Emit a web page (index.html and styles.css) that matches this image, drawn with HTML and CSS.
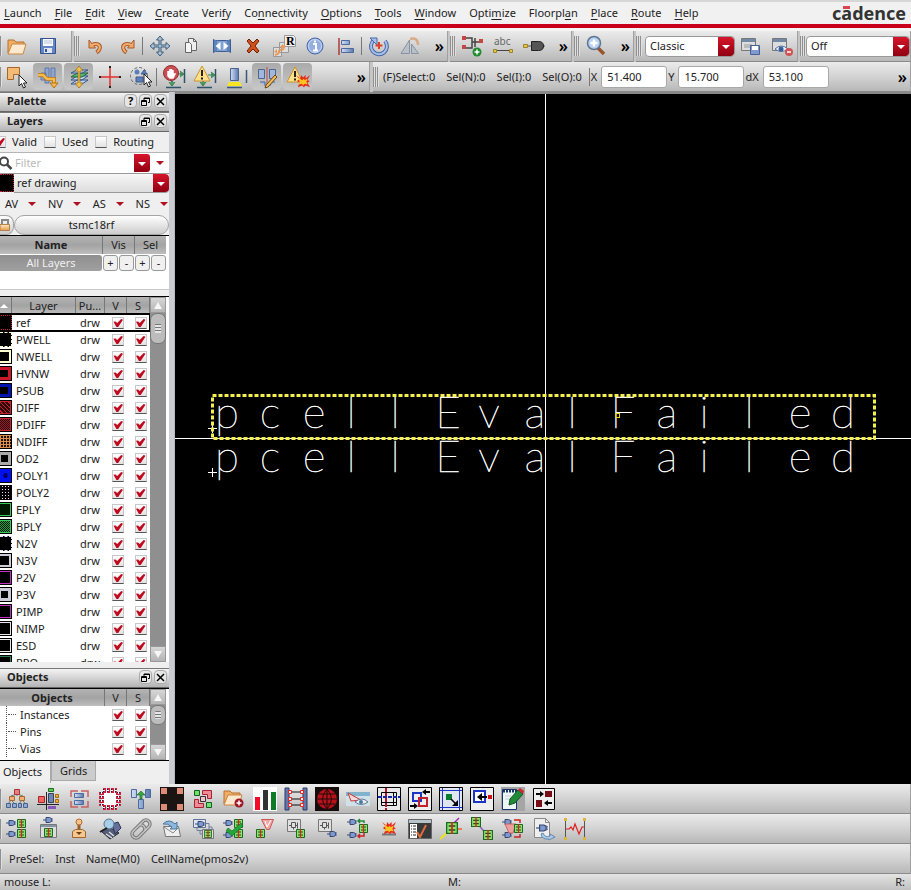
FILE: index.html
```html
<!DOCTYPE html>
<html lang="en">
<head>
    <meta charset="UTF-8">
    <meta name="viewport" content="width=device-width, initial-scale=1.0">
    <title>Layout Editor</title>
    <link rel="stylesheet" href="styles.css">
</head>
<body>
    <!-- Shared icon parts -->
    <svg class="defs" aria-hidden="true">
        <defs>
            <linearGradient id="gold" x1="0" y1="0" x2="0" y2="1"><stop offset="0" stop-color="#ffe9c4"/><stop offset="1" stop-color="#e59a45"/></linearGradient>
            <linearGradient id="steel" x1="0" y1="0" x2="1" y2="0"><stop offset="0" stop-color="#d3e0f5"/><stop offset="1" stop-color="#5877ad"/></linearGradient>
        </defs>
        <symbol id="gate" viewBox="0 0 10 6"><path d="M0 3h3" stroke="#3d4a70"/><path d="M3 .5h3.500l2 1v3l-2 1H3z" fill="#7d9ad0" stroke="#35456f"/><path d="M8 2h2M8 4h2" stroke="#54638b"/></symbol>
        <symbol id="cell" viewBox="0 0 9 9"><path d="M.5.5h8v8h-8z" fill="#8ee36d" stroke="#176b22"/><path d="M2 3h5M2 6h5" stroke="#11521a"/><path d="M4.500 0v9" stroke="#e02020" stroke-width="1.300"/></symbol>
        <symbol id="cursor" viewBox="0 0 10 15"><path d="M1 1v11l2.500-2.500 2 4.500 2-1-2-4H9z" fill="#fff" stroke="#222"/></symbol>
        <symbol id="warn" viewBox="0 0 18 17"><path d="M9 1l8 15H1z" fill="#ffe08a" stroke="#c99432" stroke-linejoin="round"/><path d="M9 5v6M9 12.500v2" stroke="#222" stroke-width="2"/></symbol>
        <symbol id="boom" viewBox="0 0 16 16"><path d="M0 1l5 4 1-4 2 3 3-3v4l5-4-3 6 3 1-3 2 3 5-5-2-2 2-2-2-5 2 2-5-3-2 3-2z" fill="#e5281c"/><path d="M3 4l4 3 2-2 1 2 3-2-1 4 1 3-3-1-2 2-1-2-4 1 1-3z" fill="#ffc41e"/></symbol>
        <symbol id="box" viewBox="0 0 14 13"><path d="M.5.5h13v12H.5z" fill="#e0e0e0" stroke="#777"/><path d="M2 6.500h2M4.500 3.500h4v5h-4zM6.500 8.500v2M8.500 6.500h2v-3M10.500 6.500v3" fill="none" stroke="#555"/></symbol>
        <symbol id="folder" viewBox="0 0 20 17"><path d="M1 15V2h6l2 2h8v4" fill="#efad65" stroke="#b77330"/><path d="M1 16L5 6h14l-3 10z" fill="#fde9cd" stroke="#c98543"/></symbol>
    </svg>

    <header class="menubar">
        <nav class="menus">
            <button><u>L</u>aunch</button>
            <button><u>F</u>ile</button>
            <button><u>E</u>dit</button>
            <button><u>V</u>iew</button>
            <button><u>C</u>reate</button>
            <button>Veri<u>f</u>y</button>
            <button>Co<u>n</u>nectivity</button>
            <button><u>O</u>ptions</button>
            <button><u>T</u>ools</button>
            <button><u>W</u>indow</button>
            <button>Opti<u>m</u>ize</button>
            <button>Floorpl<u>a</u>n</button>
            <button><u>P</u>lace</button>
            <button><u>R</u>oute</button>
            <button><u>H</u>elp</button>
        </nav>
        <div class="logo">c<span class="logo-a">ā</span>dence</div>
    </header>

    <!-- Edit toolbars -->
    <div class="toolbar toolbar-main">
        <div class="group group-first">
            <i class="handle handle-cut"></i>
            <button class="tool" aria-label="Open"><svg viewBox="0 0 24 24"><use href="#folder" x="2" y="4" width="20" height="17"/></svg></button>
            <button class="tool" aria-label="Save"><svg viewBox="0 0 24 24"><path d="M4.500 4.500h15v15h-15z" fill="#6685c5" stroke="#33508f"/><path d="M7 5h10v7H7z" fill="#f7f9fc"/><path d="M8 7h8M8 9h8" stroke="#b8c4d8"/><path d="M8 14h8v5H8z" fill="#dfe6f0"/><path d="M9 15h2v3H9z" fill="#33508f"/></svg></button>
        </div>
        <div class="group">
            <i class="handle"></i>
            <button class="tool" aria-label="Undo"><svg viewBox="0 0 24 24"><path d="M8 11c5-2.500 9 0 7.500 4-.5 1.500-1.500 2.500-3 3.500" fill="none" stroke="#a8592a" stroke-width="4"/><path d="M5 14V6l6.500 8z" fill="#f0a868" stroke="#a8592a"/><path d="M8 11c5-2.500 9 0 7.500 4-.5 1.500-1.500 2.500-2.500 3" fill="none" stroke="#f3ae70" stroke-width="2"/></svg></button>
            <button class="tool" aria-label="Redo"><svg viewBox="0 0 24 24"><path d="M16 11c-5-2.500-9 0-7.500 4 .5 1.500 1.500 2.500 3 3.500" fill="none" stroke="#a8592a" stroke-width="4"/><path d="M19 14V6l-6.500 8z" fill="#f0a868" stroke="#a8592a"/><path d="M16 11c-5-2.500-9 0-7.500 4 .5 1.500 1.500 2.500 2.500 3" fill="none" stroke="#f3ae70" stroke-width="2"/></svg></button>
            <i class="sep"></i>
            <button class="tool" aria-label="Move"><svg viewBox="0 0 24 24"><path d="M12 2l3.500 4H13v5h5V8.500l4 3.500-4 3.500V13h-5v5h2.500L12 22l-3.500-4H11v-5H6v2.500L2 12l4-3.500V11h5V6H8.500z" fill="#a9bfd4" stroke="#3f5f7c"/></svg></button>
            <button class="tool" aria-label="Copy"><svg viewBox="0 0 24 24"><path d="M9.500 4.500h5l3 3v9h-8z" fill="#eee" stroke="#666"/><path d="M14.500 4.500v3h3" fill="none" stroke="#666"/><path d="M6.500 8.500h4l2 2v8h-6z" fill="#f4f4f4" stroke="#666"/></svg></button>
            <button class="tool" aria-label="Stretch"><svg viewBox="0 0 24 24"><path d="M3.500 5.500q2 2 4 1h9q2 1 4-1v13q-2-2-4-1h-9q-2-1-4 1z" fill="#5c84bd" stroke="#3b5d91"/><path d="M7 7h10v10H7z" fill="#7fa2d2"/><path d="M10.500 8v8L5.500 12zM13.500 8v8l5-4z" fill="#fff"/></svg></button>
            <button class="tool" aria-label="Delete"><svg viewBox="0 0 24 24"><path d="M6 7l2-2 4 4 4-4 2 2-4 5 4 5-2 2-4-4-4 4-2-2 4-5z" fill="#d0501b" stroke="#702000"/></svg></button>
            <button class="tool" aria-label="Repeat"><svg viewBox="0 0 24 24"><path d="M1.500 13.500h8v9h-8zM7.500 8.500h9v10h-9z" fill="#ddd" stroke="#999"/><path d="M12.500 1.500h9l2 2v9h-11z" fill="#f2f2f2" stroke="#999"/><path d="M3 21q5-1 4-5M8 16q5 0 4-5" stroke="#eb9556" stroke-width="2" fill="none"/><path d="M2 18l3-3v4zM8 13l3-3v4z" fill="#eb9556"/><text x="14" y="11" class="icon-letter">R</text></svg></button>
            <button class="tool" aria-label="Properties"><svg viewBox="0 0 24 24"><circle cx="12" cy="12" r="8" fill="#93aedf" stroke="#4a68a8"/><circle cx="12" cy="12" r="6.500" fill="none" stroke="#c9d8f4"/><path d="M10 10h3v6M10 16.500h5M11 7.500h2" stroke="#fff" stroke-width="2" fill="none"/></svg></button>
            <button class="tool" aria-label="Align"><svg viewBox="0 0 24 24"><path d="M5 4v17" stroke="#b03a3a" stroke-width="1.500"/><path d="M7.500 6.500h8v4h-8zM7.500 14.500h12v4h-12z" fill="url(#steel)" stroke="#4c6aa0"/></svg></button>
            <i class="sep"></i>
            <button class="tool" aria-label="Rotate"><svg viewBox="0 0 24 24"><path d="M7 6a8 8 0 1 0 11 1" fill="none" stroke="#4667a6" stroke-width="4"/><path d="M7 6a8 8 0 1 0 11 1" fill="none" stroke="#a7bfe8" stroke-width="2"/><path d="M3 4h7v7z" fill="#a7bfe8" stroke="#4667a6"/><path d="M12 8v7M8.500 11.500h7" stroke="#e14026" stroke-width="2"/></svg></button>
            <button class="tool" aria-label="Flip"><svg viewBox="0 0 24 24"><path d="M3 19.500L11.500 6v13.500zM13.500 10l7 9.500h-7z" fill="#b9c0c9" stroke="#8993a0"/><path d="M12 5q8-2 8 6" fill="none" stroke="#d9aa86" stroke-width="2.500"/></svg></button>
            <button class="more" aria-label="More edit tools">»</button>
        </div>
        <div class="group">
            <i class="handle"></i>
            <button class="tool" aria-label="Create wire"><svg viewBox="0 0 24 24"><path d="M4 4h8v10H4M12 8h8M15 4v9" fill="none" stroke="#444" stroke-width="1.500"/><path d="M2 2h4v4H2zM2 11h4v4H2zM19 5h4v4h-4z" fill="#c64646"/><circle cx="17" cy="18" r="4.500" fill="#238b32"/><path d="M17 15.500v5M14.500 18h5" stroke="#fff" stroke-width="1.500"/></svg></button>
            <button class="tool" aria-label="Wire name"><svg viewBox="0 0 24 24"><text x="3" y="11" class="icon-abc">abc</text><path d="M4 16.500h17" stroke="#444"/><path d="M2.500 15.500h3v3h-3zM18.500 15.500h3v3h-3z" fill="#e3c947" stroke="#9a852b"/></svg></button>
            <button class="tool" aria-label="Create pin"><svg viewBox="0 0 24 24"><path d="M4 12h19" stroke="#555"/><path d="M9.500 7.500h7q5 0 5 4.500t-5 4.500h-7z" fill="#555" stroke="#222"/><path d="M1.500 10.500h4v3h-4z" fill="#e3c947" stroke="#9a852b"/></svg></button>
            <button class="more" aria-label="More create tools">»</button>
        </div>
        <div class="group">
            <i class="handle"></i>
            <button class="tool" aria-label="Zoom"><svg viewBox="0 0 24 24"><path d="M14 14l6 6" stroke="#9a542c" stroke-width="3.500"/><circle cx="10" cy="9" r="6.500" fill="#b9d2ef" stroke="#607591" stroke-width="1.500"/><path d="M10 5.500v7M6.500 9h7" stroke="#fff" stroke-width="2.500"/></svg></button>
            <button class="more" aria-label="More view tools">»</button>
        </div>
        <div class="group">
            <i class="handle"></i>
            <span class="combo combo-workspace"><select aria-label="Workspace"><option>Classic</option></select></span>
            <button class="tool" aria-label="Save workspace"><svg viewBox="0 0 24 24"><path d="M2.500 4.500h14v12h-14z" fill="#ddd" stroke="#777"/><path d="M3 5h13v3H3z" fill="#7189a5"/><path d="M5 11h8M5 13h6" stroke="#999"/><path d="M11.500 11.500h9v9h-9z" fill="#7e9ad1" stroke="#476197"/><path d="M13 12h6v4h-6z" fill="#fff"/></svg></button>
            <button class="tool" aria-label="Hide workspace"><svg viewBox="0 0 24 24"><path d="M2.500 4.500h14v12h-14z" fill="#ddd" stroke="#777"/><path d="M3 5h13v3H3z" fill="#7189a5"/><path d="M5 15q6-6 13 0-7 5-13 0z" fill="#eef3fa" stroke="#54719c"/><circle cx="11" cy="15" r="2.500" fill="#365f9a"/><circle cx="19" cy="18" r="4" fill="#cf5454"/><path d="M17 18h4" stroke="#fff" stroke-width="1.500"/></svg></button>
        </div>
        <div class="group group-last">
            <i class="handle"></i>
            <span class="combo"><select aria-label="Mode"><option>Off</option></select></span>
        </div>
    </div>

    <div class="toolbar toolbar-select">
        <div class="group group-options">
            <i class="handle handle-cut"></i>
            <button class="tool" aria-label="Partial select"><svg viewBox="0 0 24 24"><path d="M2.500 2.500h12v7h-6v5h-6z" fill="#f3bb78" stroke="#a76529"/><use href="#cursor" x="13" y="9" width="10" height="15"/></svg></button>
            <button class="tool pressed" aria-label="Constraint aware"><svg viewBox="0 0 24 24"><path d="M9 3h4v15H9zM15 3h4v10h-4zM5 8h5v7H5z" fill="#8ea6d2" stroke="#6078a8"/><path d="M2 10h5l4 4h7v6" fill="none" stroke="#ad7420" stroke-width="4"/><path d="M2 10h5l4 4h7v6" fill="none" stroke="#f6b94b" stroke-width="2.500"/><path d="M14 18h8l-4 5z" fill="#f6b94b" stroke="#ad7420"/></svg></button>
            <button class="tool pressed" aria-label="Hierarchy select"><svg viewBox="0 0 24 24"><path d="M4 19l6-4h11l-6 4zM4 15l6-4h11l-6 4z" fill="#c5d6ee" stroke="#31558d"/><path d="M4 12l6-4h11l-6 4z" fill="#5cb474" stroke="#1b6933"/><path d="M4 8l6-3h11l-6 3z" fill="#c5d6ee" stroke="#31558d"/><path d="M12 1l4 5h-3v12h3l-4 5-4-5h3V6H8z" fill="#f4c04c" stroke="#8b661a" stroke-width=".7"/></svg></button>
            <button class="tool" aria-label="Crosshair"><svg viewBox="0 0 24 24"><path d="M12 1v22M1 12h22" stroke="#e33131" stroke-width="1.500"/><path d="M12 1v2M12 21v2M1 12h2M21 12h2" stroke="#222" stroke-width="2"/></svg></button>
            <button class="tool" aria-label="Area select"><svg viewBox="0 0 24 24"><circle cx="10" cy="11" r="8.500" fill="none" stroke="#666" stroke-dasharray="3 2"/><circle cx="8" cy="7" r="2.500" fill="#5c7fba"/><path d="M12 9l3-4 3 4zM7 12h7v5H7z" fill="#5c7fba" stroke="#3e5b90"/><use href="#cursor" x="14" y="8" width="10" height="15"/></svg></button>
            <i class="sep"></i>
            <button class="tool" aria-label="Stop on violation"><svg viewBox="0 0 24 24"><path d="M10 16v5M4 22.500h15M22.500 4v14" stroke="#2e526c" stroke-width="1.500"/><path d="M15 9h6M18 6l4 3-4 3M7 17l3 4 3-4" fill="#4d9b61" stroke="#3c8350"/><circle cx="9" cy="8" r="7.500" fill="#c94d51" stroke="#922d33"/><path d="M6 6v5l2 2h3l2-4-2 0V5M8 9V4M9.500 9V4" fill="#fff" stroke="#fff" stroke-width="1.500"/></svg></button>
            <button class="tool" aria-label="Warn on violation"><svg viewBox="0 0 24 24"><path d="M10 16v5M4 22.500h15M22.500 4v14" stroke="#2e526c" stroke-width="1.500"/><path d="M15 10h6M18 7l4 3-4 3M7 17l3 4 3-4" fill="#4d9b61" stroke="#3c8350"/><use href="#warn" x="0" y="0" width="18" height="17"/></svg></button>
            <button class="tool" aria-label="Highlight"><svg viewBox="0 0 24 24"><path d="M6.500 3.500h8v12h-8z" fill="url(#steel)" stroke="#4b628d"/><path d="M5 17h11l2 4H3z" fill="#f5e525"/><path d="M3 22.500h15M22.500 5v13" stroke="#3a5878" stroke-width="1.500"/></svg></button>
            <button class="tool pressed" aria-label="Edit in place"><svg viewBox="0 0 24 24"><path d="M3.500 4.500h6v9h-6zM14.500 4.500h6v9h-6zM5 17h5v4M15 21v-4h5" fill="#a3b7dc" stroke="#4b6596"/><path d="M12 2v20" stroke="#b44b4b"/><path d="M11 20L20 10l2 2-9 10-3 1z" fill="#f0bd4e" stroke="#6b4420"/></svg></button>
            <button class="tool pressed" aria-label="Show violations"><svg viewBox="0 0 24 24"><use href="#warn" x="0" y="1" width="18" height="17"/><use href="#boom" x="10" y="9" width="14" height="14"/></svg></button>
            <button class="more" aria-label="More options">»</button>
        </div>
        <div class="group group-coords">
            <i class="handle"></i>
            <span class="readout">(F)Select:0</span>
            <span class="readout">Sel(N):0</span>
            <span class="readout">Sel(I):0</span>
            <span class="readout">Sel(O):0</span>
            <i class="sep"></i>
            <label class="coord">X<input type="text" value="51.400"></label>
            <label class="coord">Y<input type="text" value="15.700"></label>
            <label class="coord">dX<input type="text" value="53.100"></label>
            <button class="more" aria-label="More readouts">»</button>
        </div>
    </div>

    <main class="workspace">
        <aside class="sidebar">
            <div class="panel-title">
                <h2>Palette</h2>
                <button aria-label="Help">?</button>
                <button aria-label="Float palette"><svg viewBox="0 0 9 9"><path d="M3 1h5.500v4.500H7M.5 3.500h5v5h-5zM3 1v2M3 1.500h5.500M.5 4.500h5" fill="none" stroke="#000"/></svg></button>
                <button aria-label="Close palette"><svg viewBox="0 0 9 9"><path d="M1 1l7 7M8 1L1 8" stroke="#000" stroke-width="1.500"/></svg></button>
            </div>
            <div class="panel-title">
                <h2>Layers</h2>
                <button aria-label="Float layers"><svg viewBox="0 0 9 9"><path d="M3 1h5.500v4.500H7M.5 3.500h5v5h-5zM3 1v2M3 1.500h5.500M.5 4.500h5" fill="none" stroke="#000"/></svg></button>
                <button aria-label="Close layers"><svg viewBox="0 0 9 9"><path d="M1 1l7 7M8 1L1 8" stroke="#000" stroke-width="1.500"/></svg></button>
            </div>
            <div class="filters">
                <label><input type="checkbox" class="check" checked>Valid</label>
                <label><input type="checkbox" class="check">Used</label>
                <label><input type="checkbox" class="check">Routing</label>
            </div>
            <div class="search">
                <svg class="search-icon" viewBox="0 0 14 14"><circle cx="4" cy="5.500" r="4" fill="none" stroke="#444" stroke-width="2"/><path d="M7 8.500l4.500 4.500" stroke="#444" stroke-width="2.500"/></svg>
                <input type="text" placeholder="Filter" aria-label="Filter layers">
                <button class="drop" aria-label="Filter history"></button>
                <button class="caret" aria-label="Filter options"></button>
            </div>
            <div class="current-layer">
                <i class="swatch ref"></i>
                <span class="combo"><select aria-label="Current layer"><option>ref drawing</option></select></span>
            </div>
            <div class="visibility">
                <button>AV<i class="caret"></i></button>
                <button>NV<i class="caret"></i></button>
                <button>AS<i class="caret"></i></button>
                <button>NS<i class="caret"></i></button>
            </div>
            <div class="library">
                <button class="lock" aria-label="Lock"><svg viewBox="0 0 12 14"><path d="M2 7V2h6v5" fill="none" stroke="#888" stroke-width="2"/><path d="M0 6.500h9.500v6H0z" fill="url(#gold)" stroke="#b1824d"/></svg></button>
                <button class="lib-name">tsmc18rf</button>
            </div>
            <div class="all-layers">
                <div class="all-head"><b>Name</b><span>Vis</span><span>Sel</span></div>
                <div class="all-row">
                    <span class="all-name">All Layers</span>
                    <button aria-label="Show all">+</button>
                    <button aria-label="Hide all">-</button>
                    <button aria-label="Select all">+</button>
                    <button aria-label="Deselect all">-</button>
                </div>
            </div>
            <div class="list layer-list">
                <table>
                    <thead>
                        <tr><th class="col-swatch"><i class="sort"></i></th><th>Layer</th><th class="col-purpose">Pu...</th><th class="col-v">V</th><th class="col-s">S</th></tr>
                    </thead>
                    <tbody id="layers"></tbody>
                </table>
                <div class="scrollbar"><i class="up"></i><i class="thumb"></i><i class="down"></i></div>
            </div>
            <div class="panel-title">
                <h2>Objects</h2>
                <button aria-label="Float objects"><svg viewBox="0 0 9 9"><path d="M3 1h5.500v4.500H7M.5 3.500h5v5h-5zM3 1v2M3 1.500h5.500M.5 4.500h5" fill="none" stroke="#000"/></svg></button>
                <button aria-label="Close objects"><svg viewBox="0 0 9 9"><path d="M1 1l7 7M8 1L1 8" stroke="#000" stroke-width="1.500"/></svg></button>
            </div>
            <div class="list object-list">
                <table>
                    <thead>
                        <tr><th><b>Objects</b></th><th class="col-v">V</th><th class="col-s">S</th></tr>
                    </thead>
                    <tbody id="objects"></tbody>
                </table>
                <div class="scrollbar"><i class="up"></i><i class="thumb thumb-short"></i><i class="down"></i></div>
            </div>
            <div class="tabs">
                <button class="active">Objects</button>
                <button>Grids</button>
            </div>
        </aside>

        <svg class="canvas" role="img" aria-label="Layout view">
            <!-- cursor crosshair -->
            <path class="hair" d="M370.500 0v2000M0 344.500h4000"/>
            <!-- failed pcell labels, one anchor per letter -->
            <g class="label">
                <text y="334" x="52 95 139 176 220 273 314 360 397 448 492 529 574 625 668">pcellEvalFailed</text>
                <text y="378" x="52 95 139 176 220 273 314 360 397 448 492 529 574 625 668">pcellEvalFailed</text>
            </g>
            <path class="hair" d="M33 334.500h9M37.500 330v9M33 378.500h9M37.500 374v9"/>
            <!-- selection -->
            <rect class="selection" x="37.500" y="301.500" width="662" height="43"/>
            <rect class="origin" x="440.500" y="319.500" width="4" height="4"/>
        </svg>
    </main>

    <!-- Design toolbars -->
    <div class="toolbar">
        <div class="group group-last">
            <i class="handle handle-cut"></i>
            <button class="tool" aria-label="Hierarchy"><svg viewBox="0 0 24 24"><path d="M12 6v3M6 13l-3 4M6 13l4 4M17 13l-3 4M17 13l4 4M6 9l6-2 6 2" fill="none" stroke="#777"/><path d="M9.500 2.500h5v5h-5z" fill="#e58080" stroke="#a33"/><path d="M4.500 9.500h5v4h-5zM14.500 9.500h5v4h-5z" fill="#f2b073" stroke="#a66a30"/><path d="M1.500 16.500h4v4h-4zM7.500 16.500h4v4h-4zM13.500 16.500h3v4h-3zM18.500 16.500h4v4h-4z" fill="#8fa9d4" stroke="#46628f"/></svg></button>
            <button class="tool" aria-label="Placement"><svg viewBox="0 0 24 24"><path d="M2.500 9.500h6v6h-6z" fill="#e66" stroke="#a22"/><path d="M12.500 1.500h5v3h-5z" fill="#5c5" stroke="#262"/><path d="M12.500 6.500h5v9h-5z" fill="#6d86b5" stroke="#345"/><path d="M19.500 7.500h3v3h-3zM19.500 12.500h3v3h-3z" fill="#f2ad33" stroke="#a66a10"/><path d="M12 19h8v3h-8z" fill="#85b"/><path d="M10.500 5v18M1 17.500h22" stroke="#222"/></svg></button>
            <button class="tool" aria-label="Fit group"><svg viewBox="0 0 24 24"><path d="M4 10V4h7M14 4h7v6M21 14v6h-7M11 20H4v-6" fill="none" stroke="#c96060" stroke-width="1.500"/><path d="M7.500 6.500h9v4h-9zM7.500 13.500h9v4h-9z" fill="url(#steel)" stroke="#4c6aa0"/></svg></button>
            <button class="tool" aria-label="Pad ring"><svg viewBox="0 0 24 24"><path d="M4 5h16v15H4z" fill="#fff"/><path d="M5 3.500h14M5 20.500h14M3.500 5v14M20.500 5v14" stroke="#d31f3e" stroke-width="5" stroke-dasharray="3 1"/><path d="M5 3.500h14M5 20.500h14M3.500 5v14M20.500 5v14" stroke="#224" stroke-width="3" stroke-dasharray="1 3"/><path d="M5 3.500h14M5 20.500h14M3.500 5v14M20.500 5v14" stroke="#fff" stroke-width="1" stroke-dasharray="2 2"/></svg></button>
            <button class="tool" aria-label="Insert device"><svg viewBox="0 0 24 24"><path d="M2.500 2.500h5v8h-5zM16.500 2.500h5v8h-5zM9.500 12.500h5v9h-5z" fill="url(#steel)" stroke="#4c6aa0"/><path d="M12 4l4 4h-3v4h-2V8H8z" fill="#36a844" stroke="#17611f" stroke-width=".6"/></svg></button>
            <button class="tool" aria-label="Cross"><svg viewBox="0 0 24 24"><path d="M0 0h24v24H0z" fill="#1a1512"/><path d="M1 1h6v6H1zM17 1h6v6h-6zM1 17h6v6H1zM17 17h6v6h-6z" fill="#dd8a76"/></svg></button>
            <button class="tool" aria-label="Floorplan blocks"><svg viewBox="0 0 24 24"><path d="M11.500 3.500h9v8h-4v-4h-5zM3.500 12.500h4v4h5v4h-9z" fill="#ee8b94" stroke="#a82332"/><path d="M3.500 3.500h5v5h-5zM15.500 15.500h5v5h-5z" fill="#6de36d" stroke="#165f20"/><path d="M9.500 9.500h5v5h-5z" fill="#f7c3c8" stroke="#333"/></svg></button>
            <button class="tool" aria-label="Add library"><svg viewBox="0 0 24 24"><use href="#folder" x="1" y="2" width="20" height="17"/><circle cx="17" cy="16" r="4.500" fill="#a01825"/><path d="M17 13.500v5M14.500 16h5" stroke="#fff" stroke-width="1.500"/></svg></button>
            <button class="tool" aria-label="Statistics"><svg viewBox="0 0 24 24"><path d="M0 0h24v24H0z" fill="#fff"/><path d="M2 10h5v13H2z" fill="#f30b2a"/><path d="M10 3h5v20h-5z" fill="#333"/><path d="M18 5h5v18h-5z" fill="#0d7b27"/></svg></button>
            <button class="tool" aria-label="Routing channel"><svg viewBox="0 0 24 24"><path d="M1 1h4v22H1zM19 1h4v22h-4z" fill="#6477aa" stroke="#2c3a66"/><path d="M5 5h14M5 12h14M5 18h14" stroke="#111"/><path d="M4.500 3.500h3v3h-3zM16.500 3.500h3v3h-3zM4.500 10.500h3v3h-3zM16.500 10.500h3v3h-3zM4.500 16.500h3v3h-3zM16.500 16.500h3v3h-3z" fill="#fff" stroke="#e22"/></svg></button>
            <button class="tool" aria-label="Global net"><svg viewBox="0 0 24 24"><path d="M0 0h24v24H0z" fill="#160c0c"/><circle cx="12" cy="12" r="10" fill="#b5121b"/><path d="M2 12h20M4 7h16M4 17h16M12 2v20M12 2q-9 10 0 20M12 2q9 10 0 20" fill="none" stroke="#250808"/></svg></button>
            <button class="tool" aria-label="View net"><svg viewBox="0 0 24 24"><path d="M0 5h24v14H0z" fill="#cfe2ea"/><path d="M0 5h24v4H0z" fill="#82b3ce"/><path d="M2 6l13 7-10 1z" fill="#f5dada" stroke="#cf3434"/><path d="M9 15q7-6 13 0-7 5-13 0z" fill="#eee" stroke="#5b7897"/><circle cx="15" cy="15" r="2" fill="#4579a5"/></svg></button>
            <button class="tool" aria-label="Center axes"><svg viewBox="0 0 24 24"><path d="M.5.5h23v23H.5z" fill="#e9e9e9" stroke="#000"/><path d="M4.500 5.500h15v13h-15zM16.500 5v13M5 15.500h14" fill="none" stroke="#000"/><path d="M9 1v22" stroke="#b3152b" stroke-width="2" stroke-dasharray="4 1"/><path d="M1 10h22" stroke="#1328a8" stroke-width="2" stroke-dasharray="4 1"/></svg></button>
            <button class="tool" aria-label="Swap"><svg viewBox="0 0 24 24"><path d="M.5.5h23v23H.5z" fill="#eee" stroke="#000"/><path d="M5 6h8v8H5z" fill="none" stroke="#1c35c7" stroke-width="2"/><path d="M11 11h8v8h-8z" fill="none" stroke="#c41f2d" stroke-width="2"/><path d="M22 5h-6M2 19h6" stroke="#000" stroke-width="2"/><path d="M18 2v6l-4-3zM6 16v6l4-3z"/></svg></button>
            <button class="tool" aria-label="Move in grid"><svg viewBox="0 0 24 24"><path d="M.5.5h23v23H.5z" fill="#dfe6ef" stroke="#000"/><path d="M3.500 1v22M20.500 1v22M1 3.500h22M1 20.500h22" stroke="#1c35c7"/><path d="M7 7h6v6H7z" fill="#097b31"/><path d="M12 12l6 6" stroke="#000" stroke-width="1.500"/><path d="M19 13v6h-6z"/></svg></button>
            <button class="tool" aria-label="Pull in"><svg viewBox="0 0 24 24"><path d="M.5.5h23v23H.5z" fill="#eee" stroke="#000"/><path d="M4 4h11v11H4z" fill="#fff" stroke="#1c35c7" stroke-width="2"/><path d="M18 8h4v4h-4z" fill="#d1121d"/><path d="M17 10h-6" stroke="#000" stroke-width="2"/><path d="M12 6v8l-5-4z"/></svg></button>
            <button class="tool" aria-label="Edit notes"><svg viewBox="0 0 24 24"><path d="M0 0h24v24H0z" fill="#a5a5a5"/><path d="M1.500 2.500h14v20h-14z" fill="#eef5f5" stroke="#18336c"/><path d="M2 4h13" stroke="#18336c" stroke-width="3" stroke-dasharray="2 1"/><path d="M4 9h6M4 12h5" stroke="#c3cdd4"/><path d="M9 12l8-9 5 4-8 9-6 2z" fill="#218a3a" stroke="#0e5620"/><path d="M17 3l2-2 4 3-1 3z" fill="#d3242f"/></svg></button>
            <button class="tool" aria-label="Exchange"><svg viewBox="0 0 24 24"><path d="M1.500 1.500h21v21h-21z" fill="#eee" stroke="#000"/><path d="M13 4h7v6h-7zM4 13h6v7H4z" fill="#790d15"/><path d="M4 7h5M20 16h-5" stroke="#000" stroke-width="2"/><path d="M8 4v6l4-3zM16 13v6l-4-3z"/></svg></button>
        </div>
    </div>
    <div class="toolbar">
        <div class="group group-last">
            <i class="handle handle-cut"></i>
            <button class="tool" aria-label="Generate all"><svg viewBox="0 0 24 24"><use href="#gate" x="1" y="3" width="10" height="6"/><use href="#gate" x="1" y="14" width="10" height="6"/><use href="#cell" x="12" y="2" width="9" height="9"/><use href="#cell" x="12" y="12" width="9" height="9"/></svg></button>
            <button class="tool" aria-label="Generate selected"><svg viewBox="0 0 24 24"><path d="M4.500 7.500h16v13h-16z" fill="#dcdcdc" stroke="#777"/><path d="M5 8h15v2H5z" fill="#8395a8"/><use href="#gate" x="7" y="0" width="10" height="6"/><use href="#cell" x="8" y="11" width="9" height="9"/></svg></button>
            <button class="tool" aria-label="Place cell"><svg viewBox="0 0 24 24"><path d="M12 7v8" stroke="#9a5c26" stroke-width="3"/><circle cx="12" cy="5" r="3" fill="#f8c189" stroke="#b06c31"/><path d="M5.500 14.500l3-2h7l3 2v6h-13z" fill="#f5c891" stroke="#a3652e"/><path d="M9 15h6l-3 3z" fill="#704015"/></svg></button>
            <button class="tool" aria-label="Inspect"><svg viewBox="0 0 24 24"><path d="M3 14l8-4 10 6-9 6z" fill="#555e78" stroke="#252a3a"/><path d="M14 7l6-2 3 6-6 6z" fill="#647099" stroke="#2c3453"/><circle cx="11" cy="7" r="5" fill="#a8cfe8" stroke="#59738b"/><path d="M9 11l-7 4" stroke="#222" stroke-width="2"/><path d="M8 17l6 4M11 15l5 4" stroke="#ddd" stroke-width="1.500"/></svg></button>
            <button class="tool" aria-label="Link"><svg viewBox="0 0 24 24"><g transform="rotate(-45 12 12)" fill="none"><path d="M5 8h7a4 4 0 0 1 0 8H5a4 4 0 0 1 0-8zM12 8h7a4 4 0 0 1 0 8h-7" stroke="#777" stroke-width="3.500"/><path d="M5 8h7a4 4 0 0 1 0 8H5a4 4 0 0 1 0-8zM12 8h7a4 4 0 0 1 0 8h-7" stroke="#c6c6c6" stroke-width="1.500"/></g></svg></button>
            <button class="tool" aria-label="Send update"><svg viewBox="0 0 24 24"><path d="M3.500 9.500h15l2 10h-15z" fill="#eee" stroke="#777"/><path d="M4 10l9 6 6-6" fill="none" stroke="#888"/><path d="M3 7q6-6 12 0l2-2v7h-7l2-2q-4-4-9-3z" fill="#8cb8e0" stroke="#4a779f"/></svg></button>
            <button class="tool" aria-label="Copy cells"><svg viewBox="0 0 24 24"><path d="M2.500 2.500h12v8h-12z" fill="#dfe6f2" stroke="#5d7195"/><path d="M6 10.500v3h12v-7h-3M9 14v3h12v-7h-3" fill="none" stroke="#6d80a4"/><use href="#gate" x="4" y="4" width="10" height="6"/><path d="M11.500 12.500h11v9h-11z" fill="#ddd" stroke="#777"/><use href="#cell" x="13" y="13" width="8" height="8"/></svg></button>
            <button class="tool" aria-label="Check cells"><svg viewBox="0 0 24 24"><use href="#gate" x="1" y="3" width="10" height="6"/><use href="#gate" x="1" y="15" width="10" height="6"/><use href="#cell" x="12" y="2" width="9" height="9"/><use href="#cell" x="12" y="12" width="9" height="9"/><path d="M6 11l4 3 9-8 2 3-11 10-6-5z" fill="#22a738" stroke="#126522" stroke-width=".6"/></svg></button>
            <button class="tool" aria-label="Filter cells"><svg viewBox="0 0 24 24"><path d="M8.500 2.500h12l-4 10h-3z" fill="#f1a5a5" stroke="#c65a5a"/><path d="M12 4l2 6 4-7" fill="none" stroke="#fff"/><use href="#cell" x="3" y="12" width="9" height="9"/></svg></button>
            <button class="tool" aria-label="Box to cell"><svg viewBox="0 0 24 24"><use href="#box" x="3" y="2" width="14" height="13"/><use href="#cell" x="12" y="12" width="9" height="9"/></svg></button>
            <button class="tool" aria-label="Box to gate"><svg viewBox="0 0 24 24"><use href="#box" x="3" y="2" width="14" height="13"/><use href="#gate" x="12" y="14" width="10" height="6"/></svg></button>
            <button class="tool" aria-label="Update cells"><svg viewBox="0 0 24 24"><use href="#gate" x="1" y="2" width="10" height="6"/><use href="#gate" x="1" y="15" width="10" height="6"/><use href="#cell" x="13" y="7" width="9" height="9"/><path d="M18 6V4h-6M14 2l-2 2 2 2" fill="none" stroke="#218a3a" stroke-width="1.500"/><path d="M18 16v3h-6M14 17l-2 2 2 2" fill="none" stroke="#c22" stroke-width="1.500"/></svg></button>
            <button class="tool" aria-label="Explode"><svg viewBox="0 0 24 24"><path d="M5 17.500h14" stroke="#777" stroke-width="2"/><use href="#boom" x="5" y="4" width="14" height="14"/></svg></button>
            <button class="tool" aria-label="Constraint list"><svg viewBox="0 0 24 24"><path d="M.5 2.500h23v19H.5z" fill="#37393b" stroke="#666"/><path d="M1 3h22v3H1z" fill="#b7c2c9"/><path d="M2 7h7v14H2z" fill="#fff"/><path d="M3 9h5M3 12h5M3 15h5M3 18h5" stroke="#222" stroke-dasharray="1 1 3 1"/><path d="M9 15l3 5 6-12" fill="none" stroke="#df6d3b" stroke-width="2"/></svg></button>
            <button class="tool" aria-label="Net lines"><svg viewBox="0 0 24 24"><path d="M13 8l7-7" stroke="#a322c2" stroke-width="1.500"/><path d="M1 22l9-8" stroke="#e9e41c" stroke-width="2"/><path d="M17 12h6" stroke="#e87a55" stroke-width="2"/><use href="#cell" x="7" y="5" width="12" height="12"/></svg></button>
            <button class="tool" aria-label="Connect cells"><svg viewBox="0 0 24 24"><path d="M7 6l10 12" stroke="#945fb8" stroke-width="1.500"/><use href="#cell" x="1" y="0" width="10" height="10"/><use href="#cell" x="13" y="13" width="10" height="10"/></svg></button>
            <button class="tool" aria-label="Filter nets"><svg viewBox="0 0 24 24"><use href="#gate" x="1" y="2" width="10" height="6"/><use href="#gate" x="1" y="15" width="10" height="6"/><path d="M4 7h11l-3 9H8z" fill="#eea0a0" stroke="#c66565"/><use href="#cell" x="13" y="7" width="9" height="9"/><path d="M19 6V3h-6M19 17v3h-6" fill="none" stroke="#c22" stroke-width="1.500"/></svg></button>
            <button class="tool" aria-label="Export"><svg viewBox="0 0 24 24"><path d="M2.500 1.500h11l4 4v15h-15z" fill="#efefef" stroke="#888"/><path d="M13.500 1.500v4h4" fill="none" stroke="#888"/><use href="#gate" x="4" y="7" width="12" height="8"/><path d="M11 16q2 5 7 3v-2l5 3-6 3v-1q-7 1-8-5z" fill="#abc9e8" stroke="#6589ad"/></svg></button>
            <button class="tool" aria-label="Waveform"><svg viewBox="0 0 24 24"><path d="M2.500 2v20M21.500 2v20" stroke="#555"/><path d="M1 1h3v3H1zM1 20h3v3H1zM20 1h3v3h-3zM20 20h3v3h-3z" fill="#ddb63a"/><path d="M3 12h3l2-2 2 3 2-6 4 10 3-7h2" fill="none" stroke="#e21f1f" stroke-width="1.200"/></svg></button>
        </div>
    </div>
    <div class="toolbar">
        <div class="group group-last preselect">
            <i class="handle handle-cut"></i>
            <span>PreSel:</span>
            <span>Inst</span>
            <span>Name(M0)</span>
            <span>CellName(pmos2v)</span>
        </div>
    </div>
    <footer class="statusbar">
        <span>mouse L:</span>
        <span>M:</span>
        <span>R:</span>
    </footer>

    <script src="app.js"></script>
</body>
</html>
```

FILE: styles.css
```css
:root {
    --red: #c8001a;
    --text: #222222;
    --border: #8a8a8a;
    --bar: linear-gradient(#ebebeb, #d3d3d3 50%, #b8b8b8);
    --head: linear-gradient(#b4b4b4, #a3a3a3 50%, #bdbdbd);
}

* {
    box-sizing: border-box;
}

body {
    margin: 0;
    height: 100vh;
    display: flex;
    flex-direction: column;
    overflow: hidden;
    background: #cfcfd4;
    color: var(--text);
    font: 11px/16px "Noto Sans", "Open Sans", sans-serif;
}

button, input, select {
    font: inherit;
    color: inherit;
    margin: 0;
    padding: 0;
    border: 0;
    background: none;
    border-radius: 0;
}

.defs {
    position: absolute;
    width: 0;
    height: 0;
}

/* Menu bar */
.menubar {
    display: flex;
    justify-content: space-between;
    align-items: center;
    flex: none;
    height: 28px;
    padding: 0 5px 0 4px;
    background: #f1f1f1;
    border-top: 2px solid #d6d6d6;
    border-bottom: 4px solid var(--red);
}

.menus {
    display: flex;
    gap: 13px;
}

.menus u {
    text-underline-offset: 2px;
}

.logo {
    font-size: 18px;
    line-height: 20px;
    font-weight: 700;
    color: #333333;
}

.logo-a {
    position: relative;
}

.logo-a::before {
    content: '';
    position: absolute;
    left: 2px;
    top: 5px;
    width: 7px;
    height: 3px;
    background: #dc4450;
}

/* Toolbars */
.toolbar {
    display: flex;
    flex: none;
    height: 30px;
    gap: 3px;
    background: #c6c6c6;
}

.toolbar-main {
    height: 34px;
    gap: 2px;
    padding-top: 3px;
    background: linear-gradient(#f4f4f4 3px, #c6c6c6 3px);
}

.group {
    display: flex;
    align-items: center;
    flex: none;
    background: var(--bar);
    border-right: 1px solid #a0a0a0;
    border-bottom: 1px solid var(--border);
}

.group-first {
    padding-right: 8px;
}

.group-last, .group-coords {
    flex: 1;
    min-width: 0;
}

.group-options {
    width: 370px;
}

.handle {
    flex: none;
    width: 6px;
    height: 20px;
    background: repeating-linear-gradient(90deg, #909090 0 1px, #e0e0e0 1px 2px);
}

.handle-cut {
    width: 2px;
    margin-right: -1px;
}

.sep {
    flex: none;
    width: 1px;
    height: 18px;
    margin-right: 1px;
    background: #777777;
}

.tool {
    flex: none;
    width: 31px;
    height: 29px;
    display: flex;
    align-items: center;
    justify-content: center;
}

.tool svg {
    width: 24px;
    height: 24px;
    overflow: visible;
}

.pressed {
    width: 29px;
    height: 27px;
    margin: 0 1px;
    border-radius: 4px;
    background: linear-gradient(#aaaaaa, #c8c8c8);
}

.more {
    flex: 1;
    width: 22px;
    min-width: 22px;
    padding-right: 3px;
    text-align: right;
    font-size: 16px;
    font-weight: 600;
    color: #000000;
}

.icon-letter {
    font: 700 12px "Liberation Serif", serif;
}

.icon-abc {
    font: 10px "Noto Sans", sans-serif;
    fill: #666666;
}

/* Combo boxes */
.combo {
    position: relative;
    display: flex;
    flex: 1;
    height: 21px;
    border: 1px solid #999999;
    border-radius: 4px;
    background: #ffffff;
    overflow: hidden;
}

.combo-workspace {
    width: 90px;
    flex: none;
    margin-left: 3px;
}

.combo select {
    flex: 1;
    min-width: 0;
    padding: 0 4px;
    appearance: none;
    outline: none;
}

.combo::after, .drop {
    content: '';
    flex: none;
    width: 16px;
    background: linear-gradient(#d8152a, #8f0011);
    border-radius: 0 3px 3px 0;
}

.combo::before, .drop::before {
    content: '';
    position: absolute;
    right: 4px;
    top: 8px;
    border: 4px solid transparent;
    border-top-color: #ffffff;
    border-bottom: 0;
}

/* Selection readout */
.readout {
    margin-left: 4px;
    margin-right: 7px;
    white-space: nowrap;
}

.coord {
    display: flex;
    align-items: center;
    gap: 4px;
    margin-right: 1px;
}

.coord input {
    width: 66px;
    height: 22px;
    padding: 0 5px;
    border: 1px solid #a8a8a8;
    border-radius: 3px;
    background: #ffffff;
}

/* Workspace */
.workspace {
    display: flex;
    flex: 1;
    min-height: 0;
}

.sidebar {
    display: flex;
    flex-direction: column;
    flex: none;
    width: 175px;
    padding-right: 5px;
    border-right: 1px solid #b8b8bd;
    background: linear-gradient(90deg, #efefef 169px, #cbccd3 169px);
}

.canvas {
    flex: 1;
    min-width: 0;
    height: auto;
    border-top: 2px solid #888888;
    background: #000000;
}

.panel-title {
    display: flex;
    align-items: center;
    flex: none;
    height: 20px;
    padding: 0 2px 2px 7px;
    border-top: 1px solid #777777;
    border-bottom: 1px solid #666666;
    background: linear-gradient(#f4f4f4, #b4b4b4);
}

.panel-title h2 {
    flex: 1;
    margin: 0;
    font-size: 11px;
    font-weight: 700;
}

.panel-title button {
    width: 13px;
    height: 14px;
    margin-left: 2px;
    border: 1px solid #aaaaaa;
    border-radius: 4px;
    background: #e6e6e6;
    line-height: 12px;
    font-weight: 700;
    color: #000000;
}

.panel-title svg {
    display: block;
    width: 9px;
    height: 9px;
    margin: 0 auto;
}

.filters {
    display: flex;
    align-items: center;
    height: 21px;
    margin-left: -6px;
    border-bottom: 1px solid #b5b5b5;
}

.filters label {
    display: flex;
    align-items: center;
    gap: 6px;
    margin-right: 7px;
}

.check {
    appearance: none;
    display: inline-block;
    position: relative;
    flex: none;
    width: 12px;
    height: 12px;
    border: 1px solid #c8c8c8;
    border-bottom-color: #555555;
    background: linear-gradient(#ffffff, #e2e2e2);
}

.check:checked::before {
    content: '';
    position: absolute;
    inset: 1px 0;
    background: #c00a20;
    clip-path: polygon(5% 35%, 25% 30%, 42% 50%, 82% 0, 100% 8%, 52% 100%, 34% 100%);
}

.search {
    display: flex;
    align-items: center;
    height: 20px;
    background: #ffffff;
}

.search-icon {
    width: 14px;
    height: 14px;
}

.search input {
    flex: 1;
    min-width: 0;
    padding-left: 1px;
}

.search input::placeholder {
    color: #b9b9b9;
}

.search .drop {
    position: relative;
    height: 18px;
}

.search .caret {
    margin: 0 5px 0 6px;
}

.caret {
    display: inline-block;
    border: 4px solid transparent;
    border-top-color: #b00f22;
    border-bottom: 0;
}

.current-layer {
    display: flex;
    height: 20px;
    border-top: 1px solid #999999;
}

.current-layer .swatch {
    width: 14px;
    height: 18px;
}

.current-layer .combo {
    height: 19px;
    border-width: 0 0 1px;
    border-radius: 0 4px 4px 0;
    background: linear-gradient(#f7f7f7, #dddddd);
}

.current-layer .combo select {
    padding: 0 3px;
}

.visibility {
    display: flex;
    justify-content: space-between;
    height: 22px;
    padding: 0 1px 0 5px;
}

.visibility .caret {
    margin-left: 10px;
    vertical-align: 2px;
}

.library {
    display: flex;
    height: 20px;
}

.library button {
    border: 1px solid #a5a5a5;
    border-radius: 10px;
    background: linear-gradient(#ffffff, #cccccc);
}

.library .lock {
    width: 14px;
    border-left: 0;
    border-radius: 0 8px 8px 0;
}

.lock svg {
    display: block;
    width: 12px;
    height: 14px;
}

.library .lib-name {
    flex: 1;
}

.all-layers {
    height: 55px;
    border-top: 1px solid #000000;
    border-bottom: 1px solid #c8c8c8;
    background: #ffffff;
}

.all-head {
    display: flex;
    height: 18px;
    line-height: 18px;
    margin-right: 3px;
    text-align: center;
    background: var(--head);
}

.all-head b {
    flex: 1;
}

.all-head span {
    width: 32px;
    border-left: 1px solid #777777;
}

.all-row {
    display: flex;
    gap: 1px;
    margin: 1px 3px 0 0;
}

.all-name {
    flex: 1;
    text-align: center;
    color: #f0f0f0;
    background: linear-gradient(#8f8f8f, #a0a0a0);
    border-radius: 0 3px 3px 0;
}

.all-row button {
    width: 15px;
    height: 16px;
    border: 1px solid #999999;
    border-radius: 3px;
    background: #f0f0f0;
    line-height: 12px;
}

/* Layer and object lists */
.list {
    display: flex;
    overflow: hidden;
    background: #ffffff;
    border-top: 1px solid #000000;
}

.layer-list {
    flex: 1;
    min-height: 0;
    margin: 6px 0;
}

.object-list {
    flex: none;
    height: 73px;
    border-bottom: 1px solid #000000;
}

.list table {
    flex: 1;
    align-self: flex-start;
    width: 151px;
    table-layout: fixed;
    border-collapse: separate;
    border-spacing: 0;
}

.list th {
    height: 17px;
    padding: 0;
    font-weight: 400;
    background: var(--head);
    border-right: 1px solid #777777;
}

.list td {
    height: 17px;
    padding: 0;
    line-height: 15px;
    white-space: nowrap;
}

.list td:nth-last-child(-n+2) {
    padding-left: 4px;
    text-align: center;
}

.list .check {
    display: block;
    margin: 1px auto 0;
}

.col-swatch {
    width: 12px;
}

.col-purpose {
    width: 29px;
}

.col-v {
    width: 22px;
}

.col-s {
    width: 23px;
}

.list .layer-name, .list .purpose {
    padding-left: 4px;
}

.sort {
    display: block;
    width: 0;
    border: 4px solid transparent;
    border-bottom-color: #ffffff;
    border-top: 0;
}

.current {
    outline: 2px solid #000000;
    outline-offset: -1px;
}

.scrollbar {
    display: flex;
    flex-direction: column;
    width: 19px;
    border-right: 3px solid #ffffff;
    background: #8f8f8f;
}

.up, .down {
    display: flex;
    align-items: center;
    justify-content: center;
    height: 16px;
    background: linear-gradient(#d6d6d6, #b5b5b5);
    border: 1px solid #999999;
}

.down {
    margin-top: auto;
}

.up::before, .down::before {
    content: '';
    border: 4px solid transparent;
    border-bottom: 7px solid #f7f7f7;
    border-top: 0;
}

.down::before {
    border-top: 7px solid #f7f7f7;
    border-bottom: 0;
}

.thumb {
    height: 31px;
    padding: 10px 4px;
    border: 1px solid #777777;
    border-radius: 7px;
    background: repeating-linear-gradient(#777777 0 1px, #e6e6e6 1px 3px) content-box, #bcbcbc;
}

.thumb-short {
    height: 20px;
    padding: 5px 4px;
}

/* Layer swatches */
.swatch {
    display: block;
    width: 12px;
    height: 15px;
    border: 1px solid #000000;
    border-left: 0;
    background: #000000;
}

.ref { border: 1px dotted #c22030; border-left: 0; }
.pwell { border: 1px dashed #ffffcc; border-left: 0; }
.nwell { box-shadow: inset -2px 2px #ffffd0, inset 0 -2px #ffffd0; }
.hvnw { box-shadow: inset -3px 3px #cc1828, inset 0 -3px #cc1828; }
.psub { box-shadow: inset -3px 3px #0015b0, inset 0 -3px #0015b0; }
.diff { background: repeating-linear-gradient(45deg, #300808 0 2px, #c5202d 2px 3px); box-shadow: inset -1px 1px #c5202d, inset 0 -1px #c5202d; }
.pdiff { background: repeating-conic-gradient(#90202d 0 25%, #300808 0 50%) 0 0 / 2px 2px; box-shadow: inset -1px 1px #c5202d, inset 0 -1px #c5202d; }
.ndiff { background: repeating-linear-gradient(#d8904a 0 1px, transparent 1px 3px), repeating-linear-gradient(90deg, #d8904a 0 1px, #201008 1px 3px); }
.od2 { background: linear-gradient(#000000, #000000) 1px 3px / 7px 7px no-repeat, #aaaaaa; }
.poly1 { background: radial-gradient(#000066 25%, #0010ee 30%); }
.poly2 { background: repeating-linear-gradient(transparent 0 1px, #000000 1px 3px), repeating-linear-gradient(90deg, #000000 0 2px, #ffc8ff 2px 3px); }
.eply { background: radial-gradient(#35cc55 20%, #001800 25%) 0 0 / 4px 4px; box-shadow: inset -1px 1px #35cc55, inset 0 -1px #35cc55; }
.bply { background: repeating-conic-gradient(#259c45 0 25%, #001800 0 50%) 0 0 / 2px 2px; box-shadow: inset -1px 1px #35cc55, inset 0 -1px #35cc55; }
.n2v { border: 1px dashed #e5e5ff; border-left: 0; }
.n3v { box-shadow: inset -2px 2px #ccccd8, inset 0 -2px #ccccd8; }
.p2v, .pimp { box-shadow: inset -1px 1px #c030c0, inset 0 -1px #c030c0; }
.p3v { background: linear-gradient(#000000, #000000) 1px 3px / 7px 7px no-repeat, #ccccd8; }
.nimp, .esd { box-shadow: inset -1px 1px #e8e8e8, inset 0 -1px #e8e8e8; }
.rpo { box-shadow: inset -1px 1px #2a8055, inset 0 -1px #2a8055; }

.list .tree {
    position: relative;
    padding-left: 20px;
}

.tree::before {
    content: '';
    position: absolute;
    left: 6px;
    top: 0;
    height: 17px;
    border-left: 1px dotted #555555;
}

.tree::after {
    content: '';
    position: absolute;
    left: 8px;
    top: 8px;
    width: 8px;
    border-bottom: 1px dotted #555555;
}

.tabs {
    display: flex;
    align-items: flex-start;
    flex: none;
    height: 23px;
}

.tabs button {
    height: 20px;
    padding: 0 8px;
    border: 1px solid #aaaaaa;
    border-top: 0;
    background: #cccccc;
}

.tabs .active {
    height: 22px;
    padding-left: 3px;
    border-left: 0;
    border-bottom: 0;
    background: #f0f0f0;
}

/* Layout canvas */
.hair {
    fill: none;
    stroke: #ffffff;
    stroke-width: 1px;
}

.label {
    fill: #ffffff;
    stroke: #ffffff;
    stroke-width: 0.5px;
    font: 100 44px Lato, Inter, sans-serif;
    text-anchor: middle;
}

.selection {
    fill: none;
    stroke: #f5ee50;
    stroke-width: 3px;
    stroke-dasharray: 4 2;
}

.origin {
    fill: none;
    stroke: #e0d820;
}

/* Bottom bars */
.preselect {
    gap: 11px;
}

.preselect .handle {
    margin-right: -4px;
}

.statusbar {
    display: flex;
    justify-content: space-between;
    flex: none;
    height: 16px;
    padding: 0 6px 0 4px;
    background: linear-gradient(#e4e4e4, #c0c0c0);
}

.statusbar span {
    flex: 1;
}

.statusbar span:nth-child(2) {
    text-align: center;
}

.statusbar span:last-child {
    text-align: right;
}
```

FILE: app.js
```js
const layers = ['ref', 'PWELL', 'NWELL', 'HVNW', 'PSUB', 'DIFF', 'PDIFF', 'NDIFF', 'OD2', 'POLY1', 'POLY2',
    'EPLY', 'BPLY', 'N2V', 'N3V', 'P2V', 'P3V', 'PIMP', 'NIMP', 'ESD', 'RPO'];
const objects = ['Instances', 'Pins', 'Vias'];

/* Visible / selectable tick boxes shared by both lists */
function checks(name) {
    return `<td><input type="checkbox" class="check" aria-label="${name} visible" checked></td>
        <td><input type="checkbox" class="check" aria-label="${name} selectable" checked></td>`;
}

document.getElementById('layers').innerHTML = layers.map((name, i) => `
    <tr class="${i === 0 ? 'current' : ''}">
        <td><i class="swatch ${name.toLowerCase()}"></i></td>
        <td class="layer-name">${name}</td>
        <td class="purpose">drw</td>
        ${checks(name)}
    </tr>`).join('');

document.getElementById('objects').innerHTML = objects.map(name => `
    <tr><td class="tree">${name}</td>${checks(name)}</tr>`).join('');
```
